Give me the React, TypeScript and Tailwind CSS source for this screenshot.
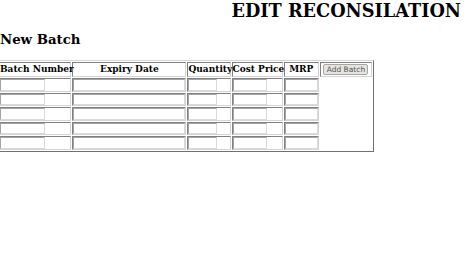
import React from 'react';

const serif = { fontFamily: '"DejaVu Serif", serif' };

const cell = 'p-0 border border-t-[#808080] border-l-[#808080] border-r-[#d4d4d4] border-b-[#d4d4d4]';

function Field({ w }: { w: string }) {
  return (
    <div
      className={`${w} h-[11.6px] bg-white border border-t-[#a4a4a4] border-l-[#a4a4a4] border-r-[#dadada] border-b-[#dadada]`}
    />
  );
}

export default function App() {
  const rows = [0, 1, 2, 3, 4];
  return (
    <div className="w-[474px] h-[278px] bg-white text-black overflow-hidden" style={serif}>
      <h1 className="text-right pr-[13px] pt-[1px] text-[17.7px] font-bold leading-[20px]">EDIT RECONSILATION</h1>
      <h3 className="mt-[11px] text-[13.3px] font-bold leading-[16px]">New Batch</h3>
      <table className="-ml-[3px] mt-[12px] w-[377px] table-fixed border-separate border-spacing-[1px] border border-t-[#d4d4d4] border-l-[#d4d4d4] border-r-[#707070] border-b-[#707070]">
        <colgroup>
          <col className="w-[72px]" />
          <col className="w-[114px]" />
          <col className="w-[43px]" />
          <col className="w-[51px]" />
          <col className="w-[35px]" />
          <col className="w-[52px]" />
        </colgroup>
        <thead>
          <tr className="h-[15px] text-[9px] font-bold leading-[11px] whitespace-nowrap">
            <th className={cell}>Batch Number</th>
            <th className={cell}>Expiry Date</th>
            <th className={cell}>Quantity</th>
            <th className={cell}>Cost Price</th>
            <th className={cell}>MRP</th>
            <th className={cell}>
              <div className="flex justify-center">
                <button
                  className="w-[45px] h-[11px] text-[7.5px] leading-[9px] font-normal text-[#555] bg-[#e6e4e0] border border-[#a8a6a2] rounded-[2px] whitespace-nowrap"
                  style={{ fontFamily: '"DejaVu Sans", sans-serif' }}
                >
                  Add Batch
                </button>
              </div>
            </th>
          </tr>
        </thead>
        <tbody>
          {rows.map((r) => (
            <tr key={r}>
              <td className={cell}><Field w="w-[45px]" /></td>
              <td className={cell}><Field w="w-full" /></td>
              <td className={cell}><Field w="w-[29px]" /></td>
              <td className={cell}><Field w="w-[34px]" /></td>
              <td className={cell}><Field w="w-full" /></td>
              <td className="p-0" />
            </tr>
          ))}
        </tbody>
      </table>
    </div>
  );
}
